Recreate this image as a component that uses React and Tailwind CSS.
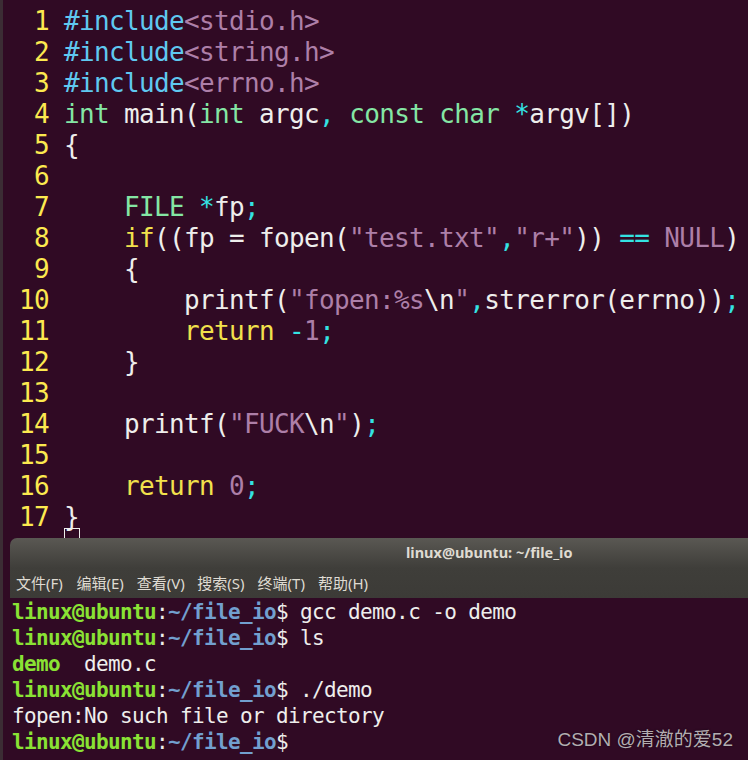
const mono = { fontFamily: '"DejaVu Sans Mono", "Liberation Mono", monospace' };

const C = {
  w: 'text-[#eeeeec]',
  pre: 'text-[#5fc8f0]',
  str: 'text-[#ad7fa8]',
  type: 'text-[#84e6a4]',
  stmt: 'text-[#f2e14c]',
  op: 'text-[#34e2e2]',
};

// each line is a list of [text, colour] pieces
const code = [
  [['#include', C.pre], ['<stdio.h>', C.str]],
  [['#include', C.pre], ['<string.h>', C.str]],
  [['#include', C.pre], ['<errno.h>', C.str]],
  [['int', C.type], [' main(', C.w], ['int', C.type], [' argc', C.w], [',', C.op], [' ', C.w], ['const', C.type], [' ', C.w], ['char', C.type], [' ', C.w], ['*', C.op], ['argv[])', C.w]],
  [['{', C.w]],
  [],
  [['    ', C.w], ['FILE', C.type], [' ', C.w], ['*', C.op], ['fp', C.w], [';', C.op]],
  [['    ', C.w], ['if', C.stmt], ['((fp = fopen(', C.w], ['"test.txt"', C.str], [',', C.op], ['"r+"', C.str], [')) ', C.w], ['==', C.op], [' ', C.w], ['NULL', C.str], [')', C.w]],
  [['    {', C.w]],
  [['        printf(', C.w], ['"fopen:%s', C.str], ['\\n', C.w], ['"', C.str], [',', C.op], ['strerror(errno))', C.w], [';', C.op]],
  [['        ', C.w], ['return', C.stmt], [' ', C.w], ['-', C.op], ['1', C.str], [';', C.op]],
  [['    }', C.w]],
  [],
  [['    printf(', C.w], ['"FUCK', C.str], ['\\n', C.w], ['"', C.str], [')', C.w], [';', C.op]],
  [],
  [['    ', C.w], ['return', C.stmt], [' ', C.w], ['0', C.str], [';', C.op]],
  [['}', C.w]],
];

const menus = ['文件(F)', '编辑(E)', '查看(V)', '搜索(S)', '终端(T)', '帮助(H)'];

function Prompt({ cmd }) {
  return (
    <div className="h-[26px] leading-[26px] whitespace-pre">
      <span className="font-bold text-[#8ae234]">linux@ubuntu</span>
      <span className="text-[#eeeeec]">:</span>
      <span className="font-bold text-[#729fcf]">~/file_io</span>
      <span className="text-[#eeeeec]">{'$ ' + cmd}</span>
    </div>
  );
}

export default function App() {
  return (
    <div className="relative w-[748px] h-[760px] overflow-hidden bg-[#300a24]">
      {/* Vim window */}
      <div className="h-[538px] flex flex-col overflow-hidden">
        <div className="h-[4px] bg-[#3d3c38]" />
        <div className="flex flex-1">
          <div className="w-[3px] bg-[#3b2c34]" />
          <div className="pt-[6px] pl-px text-[26px] tracking-[-0.65px]" style={mono}>
            {code.map((line, i) => (
              <div key={i} className="h-[31px] leading-[31px] whitespace-pre">
                <span className="text-[#fce94f]">{String(i + 1).padStart(3, ' ') + ' '}</span>
                {line.map(([t, c], j) => (
                  <span key={j} className={c}>{t}</span>
                ))}
              </div>
            ))}
            <div className="h-[31px] flex -mt-[5px]">
              <div className="w-[60px]" />
              <div className="w-[16px] h-[28px] border border-[#eeeeec]" />
            </div>
          </div>
        </div>
      </div>

      {/* Terminal window */}
      <div className="flex h-[222px]">
        <div className="w-[3px] bg-[#3b2c34]" />
        <div className="w-[7px]" />
        <div className="flex-1 flex flex-col">
          <div className="h-[60px] rounded-tl-[7px] bg-gradient-to-b from-[#5a5853] via-[#3f3e3a] to-[#3c3b37] flex flex-col">
            <div className="h-[30px] flex items-center pl-[396px] text-[14.5px] font-bold text-[#dfdbd2]" style={{ fontFamily: '"Noto Sans", "DejaVu Sans", sans-serif' }}>
              linux@ubuntu: ~/file_io
            </div>
            <div className="h-[30px] flex items-center pl-[6px] text-[15px] text-[#dfdbd2]" style={{ fontFamily: '"Noto Sans", "Noto Sans CJK SC", sans-serif' }}>
              {menus.map((m) => (
                <span key={m} className="w-[60.4px] shrink-0">{m}</span>
              ))}
            </div>
          </div>
          <div className="pt-px pl-[2px] text-[21px] tracking-[-0.64px]" style={mono}>
            <Prompt cmd="gcc demo.c -o demo" />
            <Prompt cmd="ls" />
            <div className="h-[26px] leading-[26px] whitespace-pre">
              <span className="font-bold text-[#8ae234]">demo</span>
              <span className="text-[#eeeeec]">  demo.c</span>
            </div>
            <Prompt cmd="./demo" />
            <div className="h-[26px] leading-[26px] whitespace-pre text-[#eeeeec]">fopen:No such file or directory</div>
            <Prompt cmd="" />
          </div>
        </div>
      </div>

      {/* watermark */}
      <div
        className="absolute right-[15px] bottom-[6px] text-[19px] text-[#b3adb1] [text-shadow:0_0_2px_rgba(0,0,0,0.6)]"
        style={{ fontFamily: '"Liberation Sans", "Noto Sans CJK SC", sans-serif' }}
      >
        CSDN @清澈的爱52
      </div>
    </div>
  );
}
